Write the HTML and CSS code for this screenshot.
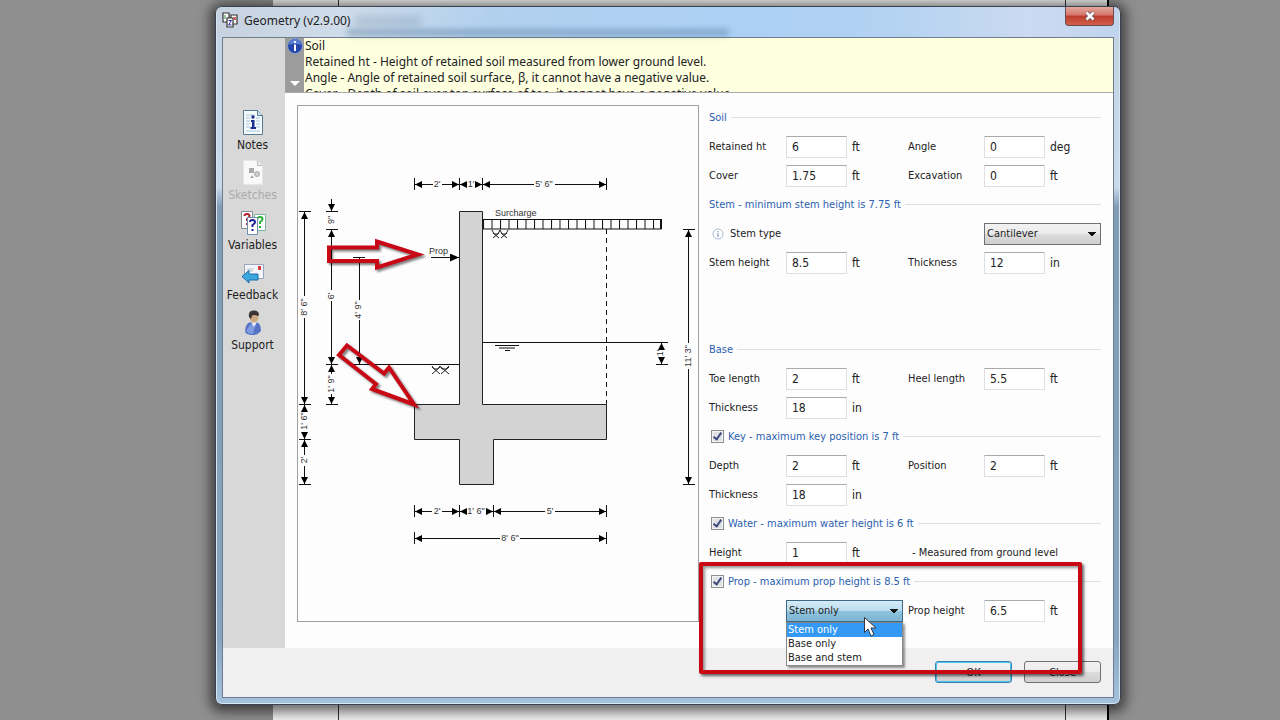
FILE: index.html
```html
<!DOCTYPE html>
<html lang="en">
<head>
  <meta charset="UTF-8" />
  <meta name="viewport" content="width=device-width, initial-scale=1.0"/>
  <title>Geometry (v2.9.00)</title>
  <link rel="stylesheet" href="styles.css">
</head>
<body>
<!-- Document behind the dialog -->
<div class="sheet"></div>

<div class="window">
  <header class="titlebar">
    <svg class="app-icon" width="16" height="16" viewBox="0 0 16 16">
      <g fill="#fff" stroke="#333" stroke-width="1.2">
        <path d="M1 1h6v9H1z"/><path d="M9 3h6v9H9z"/><path d="M5 6h6v9H5z"/>
      </g>
      <path d="M3 3v4" stroke="#2a8a3a" fill="none"/>
      <path d="M11.500 5l2 3M13.500 5l-1 3" stroke="#c22" fill="none"/>
      <path d="M6.500 8.500h3l-3 4.500h3" stroke="#22a" fill="none"/>
    </svg>
    <h1>Geometry (v2.9.00)</h1>
    <span class="smudge"></span>
    <span class="smudge wide"></span>
    <button class="close-x" type="button" aria-label="Close window">
      <svg width="12" height="10" viewBox="0 0 12 10">
        <path d="M2.500 1.500l7 7M9.500 1.500l-7 7" stroke="#5a4a50" stroke-width="4"/>
        <path d="M2.500 1.500l7 7M9.500 1.500l-7 7" stroke="#fff" stroke-width="2.600"/>
      </svg>
    </button>
  </header>

  <div class="client">
    <div class="main">
      <nav class="sidebar">
        <button type="button">
          <svg width="26" height="28" viewBox="0 0 26 28">
            <path d="M3.500 1.500h14l5 5v19h-19z" fill="#f4f9fc" stroke="#557b92"/>
            <path d="M17.500 1.500v5h5" fill="#cfe3ee" stroke="#557b92"/>
            <path d="M6 6h9M6 9h4M16 9h4M6 12h4M16 12h4M6 15h4M16 15h4M6 18h4M16 18h4M6 22h14" stroke="#a9c6d6"/>
            <path d="M11 11h3.500v7H16v2h-5.500v-2H12v-5h-1z" fill="#1b2f8c"/>
            <circle cx="13" cy="8" r="1.700" fill="#1b2f8c"/>
          </svg>
          Notes
        </button>
        <button type="button" disabled>
          <svg width="26" height="28" viewBox="0 0 26 28">
            <path d="M3.500 1.500h14l5 5v19h-19z" fill="#f9f9f9" stroke="#e6e6e6"/>
            <path d="M17.500 1.500v5h5" fill="#e8e8e8" stroke="#bbb"/>
            <path d="M9 9h5v5H9z" fill="#aaa"/>
            <circle cx="17" cy="15" r="2.500" fill="#ccc" stroke="#aaa"/>
            <path d="M10 19l2-3 2 3z" fill="#aaa"/>
          </svg>
          Sketches
        </button>
        <button type="button">
          <svg width="26" height="28" viewBox="0 0 26 28">
            <path d="M1.500 2.500h11v17h-11z" fill="#fff" stroke="#8a8a95"/>
            <path d="M4.500 7q0-2 2.500-2t2.500 2q0 1.500-2.500 3v2M7 14v2" fill="none" stroke="#b3202c" stroke-width="2"/>
            <path d="M14.500 5.500h11v16h-11z" fill="#fff" stroke="#7ab6a0"/>
            <path d="M17.500 10q0-2 2.500-2t2.500 2q0 1.500-2.500 3v2M20 17v2" fill="none" stroke="#25b03a" stroke-width="2"/>
            <path d="M7.500 8.500h10v17h-10z" fill="#fff" stroke="#6f8fae"/>
            <path d="M10 13q0-2 2.500-2t2.500 2q0 1.500-2.500 3v2M12.500 20v2" fill="none" stroke="#20209a" stroke-width="2"/>
          </svg>
          Variables
        </button>
        <button type="button">
          <svg width="26" height="28" viewBox="0 0 26 28">
            <path d="M4.500 5.500h19v14h-19z" fill="#f3f5fa" stroke="#9aa5bd"/>
            <path d="M7 10h7M7 12h6" stroke="#b4bccb"/>
            <path d="M18 7h3v4h-3z" fill="#d23c3c"/>
            <path d="M2 17.500l7-6v3.500h9v6H9v3z" fill="#3ba7e0" stroke="#1a6ea8"/>
          </svg>
          Feedback
        </button>
        <button type="button">
          <svg width="26" height="28" viewBox="0 0 26 28">
            <path d="M5 23q0-9 6-10h5q5 1 5 9-3 4-9 4-5 0-7-3z" fill="#5672c4"/>
            <path d="M8 19q2-4 5-5l3 1q-2 5-3 10-5 0-7-3z" fill="#7f9be0"/>
            <path d="M11 13l3 5 3-5-1-2h-4z" fill="#e8e8ee"/>
            <ellipse cx="14" cy="8" rx="4.500" ry="5.500" fill="#cfa984"/>
            <path d="M9 8q-1-6 4-6.500 6-.5 6 4.500l-1 1q-5-2-6 0l-1 3z" fill="#3b3634"/>
          </svg>
          Support
        </button>
      </nav>

      <div class="content">
        <div class="info">
          <div class="info-strip">
            <svg width="16" height="16" viewBox="0 0 16 16">
              <circle cx="8" cy="8" r="7.500" fill="#2346a8" stroke="#8ea4d6"/>
              <path d="M2 7a6 6 0 0 1 12 0q-6-3-12 0z" fill="#5c80d2"/>
              <path d="M8 3v2M8 6.500v6.500" stroke="#fff" stroke-width="2"/>
            </svg>
            <svg width="12" height="6" viewBox="0 0 12 6"><path d="M1 0h10L6 5z" fill="#fff"/></svg>
          </div>
          <div class="info-text">
            <p>Soil</p>
            <p>Retained ht - Height of retained soil measured from lower ground level.</p>
            <p>Angle - Angle of retained soil surface, β, it cannot have a negative value.</p>
            <p>Cover - Depth of soil over top surface of toe, it cannot have a negative value</p>
          </div>
        </div>

        <div class="workspace">
          <div class="diagram">
            <svg viewBox="298 106 400 515" role="img" aria-label="Retaining wall section">
              <defs>
                <marker id="arrow" viewBox="0 0 7 7" refX="7" refY="3.500" markerWidth="7" markerHeight="7" markerUnits="userSpaceOnUse" orient="auto-start-reverse">
                  <path d="M0 0l7 3.500L0 7z"/>
                </marker>
                <marker id="arrow-big" viewBox="0 0 9 8" refX="9" refY="4" markerWidth="9" markerHeight="8" markerUnits="userSpaceOnUse" orient="auto">
                  <path d="M0 0l9 4-9 4z"/>
                </marker>
                <pattern id="hatch" x="483" y="219" width="8.500" height="10" patternUnits="userSpaceOnUse">
                  <path d="M.5 0v10" stroke="#111"/>
                </pattern>
              </defs>

              <!-- wall, base and key -->
              <path class="concrete" d="M459.500 211.500h23v193h124v35h-113v45h-34v-45h-45v-35h45z"/>

              <!-- surcharge -->
              <rect x="483" y="219.500" width="178" height="9.500" fill="url(#hatch)" stroke="#111"/>
              <path class="line" d="M661 219v10" stroke-width="2"/>
              <text x="495" y="216" class="name">Surcharge</text>
              <path class="soil" d="M492 230l2 4h4l2-4 2 4h4l2-4M493 238l6-5M493 233l6 5M501 238l6-5M501 233l6 5"/>
              <path class="line" d="M606.500 229v175" stroke-dasharray="5 4"/>

              <!-- ground and water -->
              <path class="line" d="M353 364.500h106M482 342.500h186M495 345.500h24M499 348h16M505 350.500h5"/>
              <path class="soil" d="M432 366l2 3h4l2-3 2 3h4l3-3M432 374l8-7M432 367l8 7M441 374l8-7M441 367l8 7"/>

              <!-- prop -->
              <text x="429" y="254" class="name">Prop</text>
              <path class="line" d="M431 257.500h28" marker-end="url(#arrow-big)"/>

              <!-- ticks -->
              <path class="line" d="M414.500 178v12M459.500 178v12M482.500 178v12M606.500 178v12
                M414.500 505v12M459.500 505v12M493.500 505v12M606.500 505v12M414.500 532v12M606.500 532v12
                M299 211.500h12M299 404.500h12M299 439.500h12M299 484.500h12
                M326 211.500h12M326 229.500h12M326 364.500h12M326 404.500h12M353 257.500h12
                M683 229.500h12M683 484.500h12M656 364.500h12"/>

              <!-- dimension lines -->
              <g class="dim">
                <path d="M433 184.500h-18"/><path d="M442 184.500h17"/>
                <path d="M466 184.500h-6"/><path d="M475 184.500h7"/>
                <path d="M534 184.500h-51"/><path d="M555 184.500h51"/>
                <path d="M432 511.500h-17"/><path d="M442 511.500h17"/>
                <path d="M466 511.500h-6"/><path d="M486 511.500h7"/>
                <path d="M545 511.500h-51"/><path d="M555 511.500h51"/>
                <path d="M500 538.500h-85"/><path d="M520 538.500h86"/>
                <path d="M304.500 296v-84"/><path d="M304.500 318v86"/>
                <path d="M304.500 411v-6"/><path d="M304.500 432v7"/>
                <path d="M304.500 455v-15"/><path d="M304.500 466v18"/>
                <path d="M331.500 199v12"/>
                <path d="M331.500 290v-60"/><path d="M331.500 301v63"/>
                <path d="M331.500 374v-9"/><path d="M331.500 394v10"/>
                <path d="M359.500 320v44"/>
                <path d="M688.500 343v-113"/><path d="M688.500 369v115"/>
                <path d="M661.500 349v-6"/><path d="M661.500 358v6"/>
              </g>
              <path class="line" d="M359.500 257v43"/>

              <g class="value">
                <text x="437" y="187">2'</text><text x="471" y="187">1'</text><text x="544" y="187">5' 6"</text>
                <text x="437" y="514">2'</text><text x="476" y="514">1' 6"</text><text x="550" y="514">5'</text>
                <text x="510" y="541">8' 6"</text>
                <text transform="translate(307 307) rotate(-90)">8' 6"</text>
                <text transform="translate(307 421) rotate(-90)">1' 6"</text>
                <text transform="translate(307 460) rotate(-90)">2'</text>
                <text transform="translate(334 220) rotate(-90)">9"</text>
                <text transform="translate(334 296) rotate(-90)">6'</text>
                <text transform="translate(334 384) rotate(-90)">1' 9"</text>
                <text transform="translate(361 310) rotate(-90)">4' 9"</text>
                <text transform="translate(691 356) rotate(-90)">11' 3"</text>
                <text transform="translate(663 353) rotate(-90)">1'</text>
              </g>

              <!-- highlights -->
              <g class="pointer">
                <path d="M329 247.500h48v-6l41 13-41 13v-6.500h-48z"/>
                <path d="M347 345.500l37 28 5-6 25 37-42-15.500 4-5-37-29z"/>
              </g>
            </svg>
          </div>

          <form class="form">
            <section>
              <h2>Soil</h2>
              <div class="row">
                <label for="retained">Retained ht</label><input id="retained" type="text" value="6"><span class="unit">ft</span>
                <label for="angle">Angle</label><input id="angle" type="text" value="0"><span class="unit">deg</span>
              </div>
              <div class="row">
                <label for="cover">Cover</label><input id="cover" type="text" value="1.75"><span class="unit">ft</span>
                <label for="excavation">Excavation</label><input id="excavation" type="text" value="0"><span class="unit">ft</span>
              </div>
            </section>

            <section class="stem">
              <h2>Stem - minimum stem height is 7.75 ft</h2>
              <div class="row">
                <label class="with-icon" for="stem-type">
                  <svg width="12" height="12" viewBox="0 0 12 12">
                    <circle cx="6" cy="6" r="5" fill="#fff" stroke="#a9bdd6"/>
                    <path d="M6 3v1.200M6 5.200V9" stroke="#7e9cc4" stroke-width="1.200"/>
                  </svg>
                  Stem type
                </label>
                <select id="stem-type" class="combo"><option>Cantilever</option></select>
              </div>
              <div class="row">
                <label for="stem-height">Stem height</label><input id="stem-height" type="text" value="8.5"><span class="unit">ft</span>
                <label for="stem-thick">Thickness</label><input id="stem-thick" type="text" value="12"><span class="unit">in</span>
              </div>
            </section>

            <section>
              <h2>Base</h2>
              <div class="row">
                <label for="toe">Toe length</label><input id="toe" type="text" value="2"><span class="unit">ft</span>
                <label for="heel">Heel length</label><input id="heel" type="text" value="5.5"><span class="unit">ft</span>
              </div>
              <div class="row">
                <label for="base-thick">Thickness</label><input id="base-thick" type="text" value="18"><span class="unit">in</span>
              </div>
            </section>

            <section>
              <h2><input id="key" type="checkbox" checked><label for="key">Key - maximum key position is 7 ft</label></h2>
              <div class="row">
                <label for="depth">Depth</label><input id="depth" type="text" value="2"><span class="unit">ft</span>
                <label for="position">Position</label><input id="position" type="text" value="2"><span class="unit">ft</span>
              </div>
              <div class="row">
                <label for="key-thick">Thickness</label><input id="key-thick" type="text" value="18"><span class="unit">in</span>
              </div>
            </section>

            <section>
              <h2><input id="water" type="checkbox" checked><label for="water">Water - maximum water height is 6 ft</label></h2>
              <div class="row">
                <label for="water-height">Height</label><input id="water-height" type="text" value="1"><span class="unit">ft</span>
                <span class="note">- Measured from ground level</span>
              </div>
            </section>

            <section class="prop">
              <h2><input id="prop" type="checkbox" checked><label for="prop">Prop - maximum prop height is 8.5 ft</label></h2>
              <div class="row">
                <div class="dropdown">
                  <select class="combo active" aria-label="Prop position">
                    <option>Stem only</option>
                    <option>Base only</option>
                    <option>Base and stem</option>
                  </select>
                  <ul class="options">
                    <li class="selected">Stem only</li>
                    <li>Base only</li>
                    <li>Base and stem</li>
                  </ul>
                  <svg class="cursor" width="14" height="22" viewBox="0 0 14 22">
                    <path d="M1.500 1.500v15l3.500-3.500 3 7 3-1.500-3-6.500h5z" fill="#fff" stroke="#334"/>
                  </svg>
                </div>
                <label for="prop-height">Prop height</label><input id="prop-height" type="text" value="6.5"><span class="unit">ft</span>
              </div>
            </section>
          </form>
        </div>
      </div>
    </div>

    <footer class="footer">
      <button class="default" type="button">OK</button>
      <button type="button">Close</button>
    </footer>
  </div>
</div>
</body>
</html>
```
FILE: styles.css
```css
*, *::before, *::after {
  margin: 0;
  padding: 0;
  box-sizing: border-box;
}

body {
  position: relative;
  font-family: "DejaVu Sans Condensed", "DejaVu Sans", sans-serif;
  font-stretch: condensed;
  font-size: 11px;
  color: #222;
  background: #8f8f8f;
  min-height: 100vh;
  overflow: hidden;
}

button, input, select {
  font: inherit;
  color: inherit;
}

.sheet {
  position: absolute;
  top: 0;
  bottom: 0;
  left: 273px;
  right: 171px;
  background: #f0f0f0;
  border-right: 2px solid #000;
}

.sheet::before {
  content: '';
  position: absolute;
  top: 0;
  bottom: 0;
  left: 65px;
  right: 41px;
  border: solid #333;
  border-width: 0 1px;
}

/* Dialog frame */
.window {
  position: relative;
  margin: 6px 159px 0 215px;
  padding: 0 6px 6px;
  border: 1px solid #3a4450;
  border-radius: 7px;
  background: linear-gradient(#c3d3e4 0, #c9d9ea 180px, #809db5 200px, #86a4bf 90%, #a3c2de 100%);
  box-shadow: inset 0 0 0 1px #d8e6f2, 0 2px 12px 5px rgba(0,0,0,0.55);
}

.titlebar {
  position: relative;
  display: flex;
  align-items: center;
  height: 30px;
  margin: 0 -5px;
  padding: 0 5px 4px;
  border-radius: 6px 6px 0 0;
  background: linear-gradient(90deg, #c6d2e0 0, #cfdcea 14%, #b2d0ee 30%, #abd0f4 60%, #b4d2f2 75%, #cbdaf0 90%, #c0d4ee 100%);
}

.app-icon {
  margin-right: 6px;
}

.titlebar h1 {
  font: 12px "Noto Sans", sans-serif;
}

.smudge {
  position: absolute;
  left: 138px;
  top: 10px;
  width: 66px;
  height: 8px;
  background: rgba(70,100,130,0.25);
  filter: blur(4px);
}

.smudge.wide {
  left: 130px;
  top: 23px;
  width: 382px;
  height: 5px;
  background: rgba(60,100,140,0.5);
  filter: blur(3px);
}

.close-x {
  align-self: flex-start;
  display: flex;
  align-items: center;
  justify-content: center;
  width: 49px;
  height: 19px;
  margin-left: auto;
  border: 1px solid #6b4a50;
  border-top: 0;
  border-radius: 0 0 4px 4px;
  background: linear-gradient(#e4a79c, #d5766a 45%, #bd3a2a 50%, #d0604a);
}

.client {
  border: 1px solid #6f7e8e;
  background: #f0f0f0;
}

.main {
  display: flex;
}

/* Sidebar */
.sidebar {
  width: 62px;
  padding-top: 71px;
  background: #d8d8d8;
}

.sidebar button {
  display: flex;
  flex-direction: column;
  align-items: center;
  width: 100%;
  height: 50px;
  padding-right: 3px;
  border: 0;
  background: none;
  font-size: 12px;
  line-height: 16px;
}

.sidebar button:disabled {
  color: #aaa;
}

.content {
  flex: 1;
  min-width: 0;
  background: #fdfdfd;
}

.info {
  display: flex;
  height: 55px;
  overflow: hidden;
  border-bottom: 1px solid #aaa;
  background: #fdffdf;
}

.info-strip {
  display: flex;
  flex-direction: column;
  justify-content: space-between;
  align-items: center;
  width: 19px;
  padding-bottom: 5px;
  background: #9c9c9c;
}

.info-text {
  padding-left: 1px;
  font: 12px/16px "Noto Sans", sans-serif;
  white-space: nowrap;
}

.workspace {
  display: flex;
  align-items: flex-start;
  gap: 10px;
  padding: 12px 12px 23px;
}

.diagram {
  flex: 1;
  border: 1px solid #a0a0a0;
}

.diagram svg {
  display: block;
  width: 100%;
}

.concrete { fill: #d3d3d3; stroke: #222; }
.line { stroke: #111; fill: none; }
.soil { stroke: #222; fill: none; }
.dim path { stroke: #111; marker-end: url(#arrow); }
.name { font: 9px "Liberation Sans", sans-serif; fill: #333; }
.value { font: 9px "Liberation Sans", sans-serif; fill: #333; text-anchor: middle; }

.pointer path {
  fill: none;
  stroke: #c90816;
  stroke-width: 4;
  filter: drop-shadow(2px 2px 1px rgba(0,0,0,0.5));
}

/* Form */
.form {
  width: 392px;
  margin-top: -2px;
}

.form h2 {
  display: flex;
  align-items: center;
  height: 29px;
  font-size: 11px;
  font-weight: normal;
  color: #2b5fb0;
}

.form h2::after {
  content: '';
  flex: 1;
  height: 1px;
  margin-left: 4px;
  background: #dcdfe3;
}

.row {
  display: grid;
  grid-template-columns: 77px 61px 61px 76px 61px 1fr;
  align-items: center;
  height: 29px;
}

.row input {
  width: 100%;
  height: 22px;
  padding-left: 5px;
  border: 1px solid #dfdfe3;
  border-top-color: #aaa;
  background: #fff;
  font-size: 12px;
}

.unit {
  padding-left: 5px;
  font-size: 12px;
}

.note {
  grid-column: 4 / -1;
  padding-left: 4px;
}

.stem {
  margin-bottom: 58px;
}

.with-icon {
  grid-column: 1 / 5;
  display: flex;
  align-items: center;
  gap: 6px;
  padding-left: 3px;
}

.combo {
  grid-column: 5 / -1;
  width: 100%;
  height: 22px;
  padding-left: 2px;
  appearance: none;
  border: 1px solid #707070;
  background:
    linear-gradient(to bottom right, #111 50%, transparent 50%) right 4px top 8px / 4px 5px no-repeat,
    linear-gradient(to bottom left, #111 50%, transparent 50%) right 8px top 8px / 4px 5px no-repeat,
    linear-gradient(#f2f2f2, #ebebeb 50%, #dddddd 50%, #cfcfcf);
}

.combo.active {
  border-color: #3c6a86;
  background:
    linear-gradient(to bottom right, #111 50%, transparent 50%) right 4px top 8px / 4px 5px no-repeat,
    linear-gradient(to bottom left, #111 50%, transparent 50%) right 8px top 8px / 4px 5px no-repeat,
    linear-gradient(#d5ebf7, #b9dcee 50%, #8fc3de 50%, #7fb5d2);
}

input[type="checkbox"] {
  appearance: none;
  display: flex;
  justify-content: center;
  width: 13px;
  height: 13px;
  margin: 0 4px 0 2px;
  border: 1px solid #8e8f8f;
  background: #dfe1e6;
  box-shadow: inset 0 0 0 1px #f4f4f4;
}

input[type="checkbox"]:checked::after {
  content: '';
  width: 5px;
  height: 9px;
  border: solid #3d4a7c;
  border-width: 0 2px 2px 0;
  transform: rotate(35deg);
}

/* Prop section with its open list */
.prop {
  position: relative;
}

.prop::after {
  content: '';
  position: absolute;
  z-index: 3;
  top: -5px;
  left: -10px;
  right: 19px;
  height: 112px;
  border: 4px solid #c90816;
  border-radius: 2px;
  box-shadow: 2px 2px 3px rgba(0,0,0,0.6), inset 2px 2px 3px rgba(0,0,0,0.4);
  pointer-events: none;
}

.dropdown {
  position: relative;
  grid-column: 2 / 4;
  width: 117px;
}

.dropdown .combo {
  display: block;
}

.prop .row label {
  grid-column: 4;
}

.options {
  position: absolute;
  z-index: 1;
  top: 22px;
  left: 0;
  right: 0;
  list-style: none;
  line-height: 14px;
  border: 1px solid #888;
  background: #fff;
  box-shadow: 2px 2px 2px rgba(0,0,0,0.4);
}

.options li {
  padding-left: 1px;
}

.options .selected {
  color: #fff;
  background: #3399f5;
}

.cursor {
  position: absolute;
  z-index: 2;
  left: 77px;
  top: 16px;
}

.footer {
  display: flex;
  justify-content: flex-end;
  gap: 12px;
  padding: 13px 12px 14px;
}

.footer button {
  width: 77px;
  height: 22px;
  border: 1px solid #707070;
  border-radius: 3px;
  background: linear-gradient(#f2f2f2, #ebebeb 50%, #dddddd 50%, #cfcfcf);
}

.footer .default {
  border-color: #3c7fb1;
  box-shadow: inset 0 0 0 1px #48c8ee;
}
```
